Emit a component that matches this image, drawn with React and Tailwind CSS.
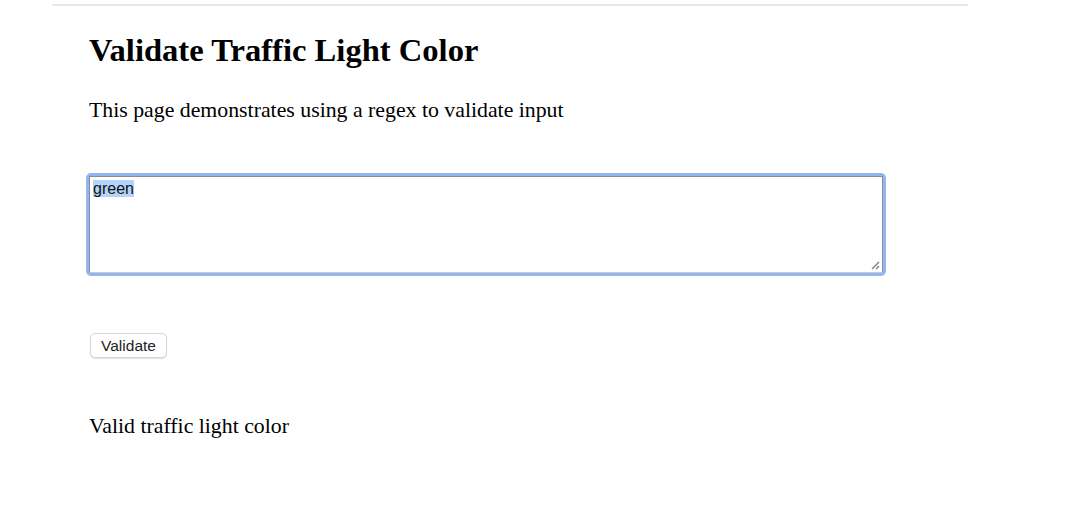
export default function App() {
  return (
    <div className="min-h-[532px] bg-white text-black font-['Liberation_Serif','Times_New_Roman',serif]">
      <div className="ml-[52px] w-[916px] pt-[4px]">
        <div className="h-[2px] bg-[#e8e8e8]" />
        <div className="pl-[37px]">
          <h1 className="mt-[26px] text-[32.6px] leading-[37px] font-bold">
            Validate Traffic Light Color
          </h1>
          <p className="mt-[29px] text-[21.8px] leading-[25px]">
            This page demonstrates using a regex to validate input
          </p>

          <div className="mt-[50px] w-[800px] -ml-[3px] rounded-[5px] border-[3px] border-[#93b5f1]">
            <div className="relative h-[97px] border border-[#8c8c8c] border-b-[#c9c9c9] bg-white pl-[3px] pt-[3px] font-['Liberation_Sans',Arial,sans-serif] text-[16px] leading-[18px] text-[#111]">
              <span className="bg-[#b4d4fb]">green</span>
              <svg
                className="absolute right-[2px] bottom-[2px]"
                width="10"
                height="10"
                viewBox="0 0 10 10"
              >
                <path d="M9 2 L2 9 M9 6 L6 9" stroke="#777" strokeWidth="1.2" />
              </svg>
            </div>
          </div>

          <button className="mt-[57px] ml-[1px] block h-[25px] w-[77px] rounded-[5px] border border-[#d6d6d6] bg-white shadow-[0_1px_1px_rgba(0,0,0,0.12)] font-['Liberation_Sans',Arial,sans-serif] text-[15.5px] leading-[20px] text-[#222]">
            Validate
          </button>

          <p className="mt-[56px] text-[21.8px] leading-[25px]">
            Valid traffic light color
          </p>
        </div>
      </div>
    </div>
  );
}
